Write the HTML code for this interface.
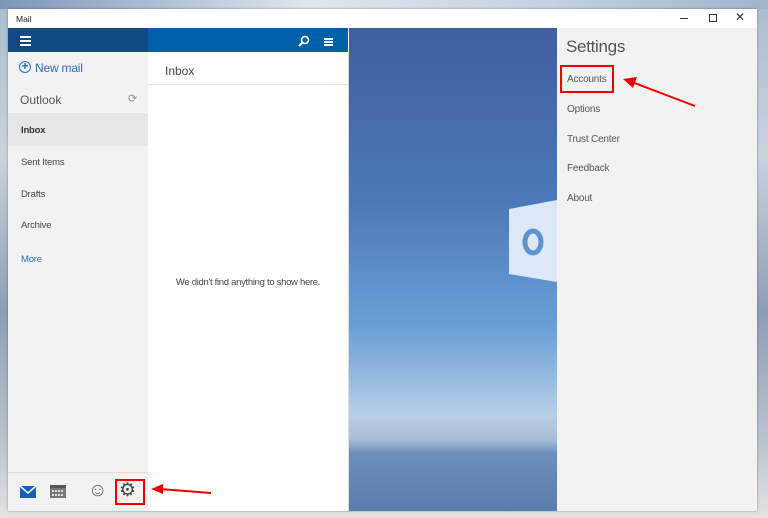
<!DOCTYPE html>
<html><head><style>
*{margin:0;padding:0;box-sizing:border-box}
body{width:768px;height:518px;position:relative;overflow:hidden;font-family:"Liberation Sans",sans-serif;
background:linear-gradient(180deg,#a9bccf 0,#c9d3dc 30%,#8d9fb5 60%,#b9c3cc 85%,#e4e4e2 100%);}
.a{position:absolute}
.win{left:8px;top:9px;width:749px;height:502px;background:#fff;box-shadow:0 0 2px rgba(0,0,0,.4)}
.t{font-size:10px;color:#555;letter-spacing:-0.2px}
.nav{font-size:9.5px;color:#333;letter-spacing:-0.2px}
</style></head><body>
<div class="a" style="left:0;top:0;width:768px;height:9px;background:linear-gradient(90deg,#7b96b8,#dfe6ee 40%,#c6d3e0 70%,#9fb5ca)"></div>
<div class="a win">
 <div class="a" style="left:8px;top:5px;font-size:8.5px;color:#222">Mail</div>
 <div class="a" style="left:672px;top:9px;width:8px;height:1px;background:#333"></div>
 <div class="a" style="left:701px;top:5px;width:8px;height:8px;border:1px solid #333"></div>
 <div class="a" style="left:727px;top:1px;font-size:12px;color:#333">✕</div>
 <div class="a" style="left:0;top:19px;width:140px;height:483px;background:#f2f2f2"></div>
 <div class="a" style="left:0;top:19px;width:140px;height:24px;background:#114a80"></div>
 <div class="a" style="left:12px;top:27px;width:11px;height:2px;background:#fff;box-shadow:0 4px 0 #fff,0 8px 0 #fff"></div>
 <div class="a" style="left:11px;top:52px;width:12px;height:12px;border:1.5px solid #2a6cbd;border-radius:50%;color:#2a6cbd;font-size:12px;line-height:8px;text-align:center;font-weight:bold">+</div>
 <div class="a" style="left:27px;top:52px;font-size:12px;color:#2a6cbd;letter-spacing:-0.2px">New mail</div>
 <div class="a" style="left:12px;top:84px;font-size:12px;color:#555">Outlook</div>
 <div class="a" style="left:120px;top:83px;font-size:11px;color:#888">⟳</div>
 <div class="a" style="left:0;top:104px;width:140px;height:33px;background:#e6e6e6"></div>
 <div class="a nav" style="left:13px;top:116px;font-weight:bold">Inbox</div>
 <div class="a nav" style="left:13px;top:148px;color:#444">Sent Items</div>
 <div class="a nav" style="left:13px;top:180px;color:#444">Drafts</div>
 <div class="a nav" style="left:13px;top:211px;color:#444">Archive</div>
 <div class="a nav" style="left:13px;top:245px;color:#2a6cbd">More</div>
 <div class="a" style="left:0;top:463px;width:140px;height:1px;background:#ddd"></div>
 <svg class="a" style="left:12px;top:477px" width="16" height="12"><rect width="16" height="12" fill="#1560b0"/><path d="M0 0 L8 7 L16 0" stroke="#fff" stroke-width="1.5" fill="none"/></svg>
 <svg class="a" style="left:42px;top:476px" width="16" height="13"><rect width="16" height="13" fill="#777"/><rect y="0" width="16" height="3" fill="#555"/><g fill="#ddd"><rect x="2" y="5" width="2" height="2"/><rect x="5" y="5" width="2" height="2"/><rect x="8" y="5" width="2" height="2"/><rect x="11" y="5" width="2" height="2"/><rect x="2" y="9" width="2" height="2"/><rect x="5" y="9" width="2" height="2"/><rect x="8" y="9" width="2" height="2"/><rect x="11" y="9" width="2" height="2"/></g></svg>
 <div class="a" style="left:80px;top:471px;font-size:19px;color:#666">☺</div>
 <div class="a" style="left:107px;top:470px;width:30px;height:26px;border:2px solid #e00"></div>
 <div class="a" style="left:111px;top:470px;font-size:19px;color:#444">⚙</div>
 <div class="a" style="left:140px;top:19px;width:200px;height:24px;background:#0060a8"></div>
 <svg class="a" style="left:290px;top:26px" width="12" height="12"><circle cx="7" cy="5" r="3.5" stroke="#fff" stroke-width="1.6" fill="none"/><path d="M4.5 7.5 L1 11" stroke="#fff" stroke-width="2"/></svg>
 <div class="a" style="left:316px;top:29px;width:9px;height:1.5px;background:#fff;box-shadow:0 3px 0 #fff,0 6px 0 #fff"></div>
 <div class="a" style="left:140px;top:43px;width:201px;height:459px;background:#fff;border-right:1px solid #ddd"></div>
 <div class="a" style="left:157px;top:55px;font-size:12px;color:#444">Inbox</div>
 <div class="a" style="left:140px;top:75px;width:200px;height:1px;background:#e6e6e6"></div>
 <div class="a" style="left:140px;top:268px;width:200px;text-align:center;font-size:9.5px;color:#444;letter-spacing:-0.3px">We didn't find anything to show here.</div>
 <div class="a" style="left:341px;top:19px;width:208px;height:483px;background:linear-gradient(180deg,#3f5f9e 0%,#4b78b6 35%,#6aa0d6 62%,#93b9df 72%,#b6d0e6 80%,#a9bfd6 85%,#6d8fbd 88%,#5a7dab 100%)"></div>
 <svg class="a" style="left:501px;top:191px" width="48" height="82"><path d="M0 9 L48 0 L48 82 L0 74Z" fill="#dce8f5"/><ellipse cx="24" cy="42" rx="8" ry="11" stroke="#5e93d0" stroke-width="5" fill="none"/></svg>
 <div class="a" style="left:549px;top:19px;width:200px;height:483px;background:#f2f2f2"></div>
 <div class="a" style="left:558px;top:28px;font-size:17px;color:#555;letter-spacing:-0.3px">Settings</div>
 <div class="a" style="left:552px;top:56px;width:54px;height:28px;border:2px solid #e00"></div>
 <div class="a t" style="left:559px;top:65px">Accounts</div>
 <div class="a t" style="left:559px;top:95px">Options</div>
 <div class="a t" style="left:559px;top:125px">Trust Center</div>
 <div class="a t" style="left:559px;top:154px">Feedback</div>
 <div class="a t" style="left:559px;top:184px">About</div>
</div>
<svg class="a" style="left:0;top:0" width="768" height="518">
 <path d="M695 106 L632 82" stroke="#e00" stroke-width="2"/><path d="M623 79 L637 77 L633 88Z" fill="#e00"/>
 <path d="M211 493 L160 489" stroke="#e00" stroke-width="2"/><path d="M151 489 L163 484 L163 494Z" fill="#e00"/>
</svg>
</body></html>
